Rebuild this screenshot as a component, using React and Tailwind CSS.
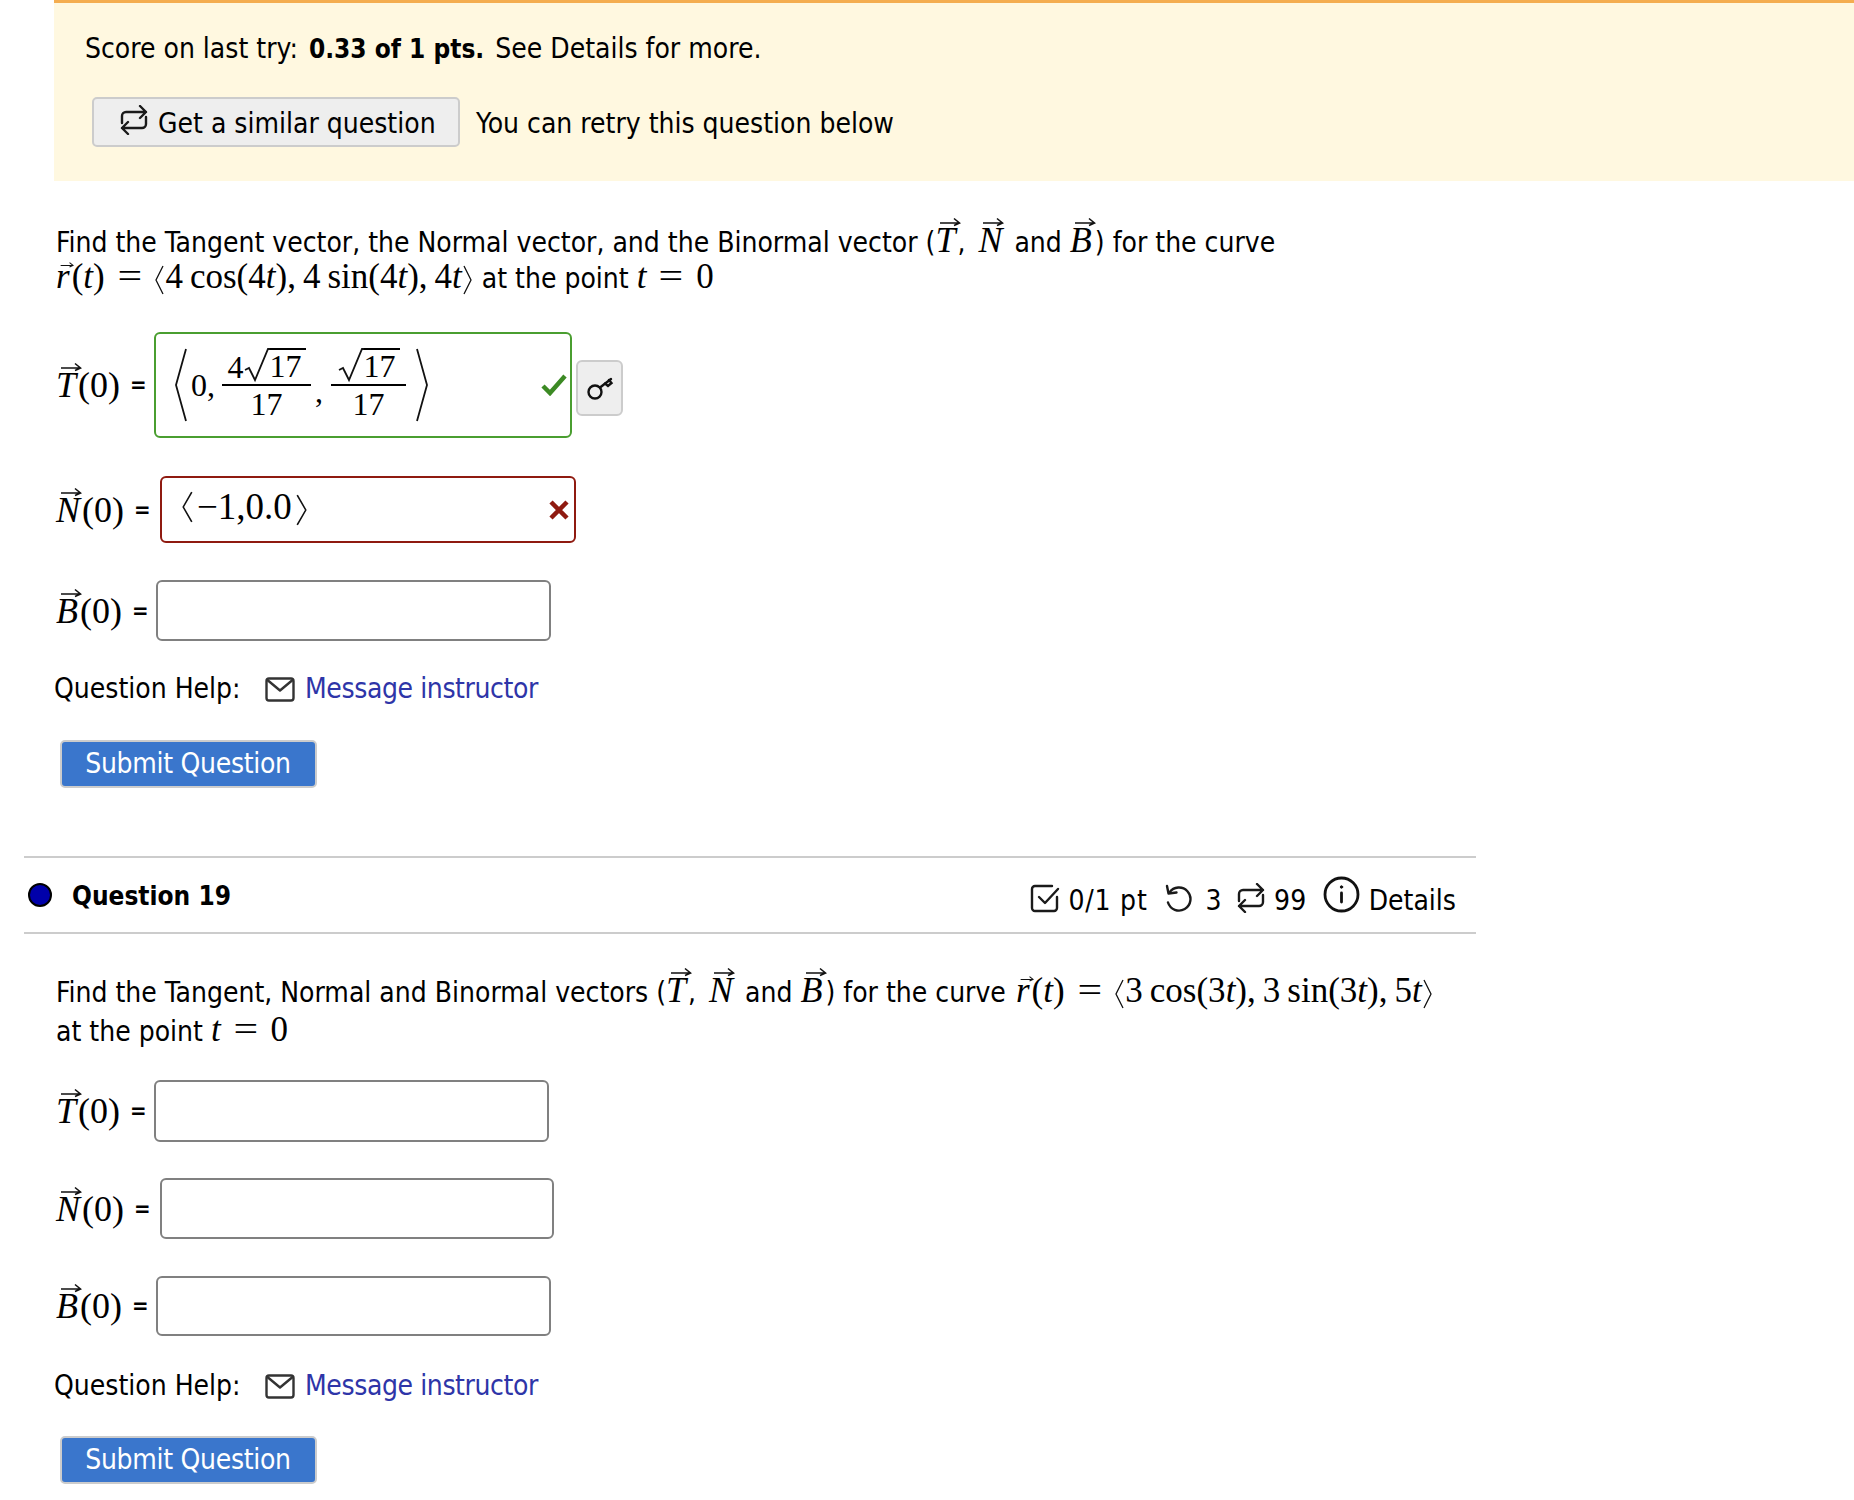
import React from "react";

const sans = "font-['DejaVu_Sans_Condensed','Noto_Sans',sans-serif]";
const serif = "font-['Liberation_Serif','DejaVu_Serif',serif]";

function Arrow({ w = 22, low }) {
  return (
    <svg width={w} height="11" viewBox="0 0 22 11" className={`absolute left-[4px] ${low ? "top-[0px]" : "top-[-6px]"}`} fill="none" stroke="#111" strokeWidth="1.6">
      <path d="M1 7h19M15 2.5 20.5 7 15 9.5" />
    </svg>
  );
}

function Vec({ c, w }) {
  return (
    <span className="relative mr-[2px] inline-block italic">
      {c}
      <Arrow w={w} low={c === "r"} />
    </span>
  );
}

function Mi({ children }) {
  return <span className="italic">{children}</span>;
}

function Eq() {
  return <span className="mx-[15px] inline-block scale-x-125">=</span>;
}

function Angle({ flip, w = 9, h = 30 }) {
  return (
    <svg width={w} height={h} viewBox="0 0 9 30" preserveAspectRatio="none" fill="none" stroke="#111" strokeWidth="1.3" className="mx-[1px] inline-block align-[-7px]">
      <path d={flip ? "M1 1l7 14-7 14" : "M8 1 1 15l7 14"} />
    </svg>
  );
}

function LoopIcon({ size = 30 }) {
  return (
    <svg width={size} height={size} viewBox="0 0 30 30" fill="none" stroke="#1a1a1a" strokeWidth="2.4" strokeLinecap="round" strokeLinejoin="round" className="shrink-0">
      <path d="M3 18v-7a4 4 0 0 1 4-4h20M21 1l6 6-6 6" />
      <path d="M27 12v7a4 4 0 0 1-4 4H3M9 17l-6 6 6 6" />
    </svg>
  );
}

function UndoIcon() {
  return (
    <svg width="30" height="30" viewBox="0 0 30 30" fill="none" stroke="#1a1a1a" strokeWidth="2.4" strokeLinecap="round" strokeLinejoin="round" className="shrink-0">
      <path d="M6.5 9.5a11.5 11.5 0 1 1-1.5 10" />
      <path d="M4 3l1.5 7.5 8-1" />
    </svg>
  );
}

function CheckBoxIcon() {
  return (
    <svg width="30" height="30" viewBox="0 0 30 30" fill="none" stroke="#1a1a1a" strokeWidth="2.4" strokeLinecap="round" strokeLinejoin="round" className="shrink-0">
      <path d="M27 14v11a3 3 0 0 1-3 3H5a3 3 0 0 1-3-3V6a3 3 0 0 1 3-3h17" />
      <path d="M9 14l6 6L28 6" />
    </svg>
  );
}

function InfoIcon() {
  return (
    <svg width="37" height="37" viewBox="0 0 37 37" fill="none" stroke="#111" strokeWidth="2.8" strokeLinecap="round" className="shrink-0">
      <circle cx="18.5" cy="18.5" r="16.5" />
      <path d="M18.5 17v9" />
      <circle cx="18.5" cy="11" r="1.2" fill="#111" stroke="#111" strokeWidth="1" />
    </svg>
  );
}

function MailIcon() {
  return (
    <svg width="30" height="25" viewBox="0 0 30 25" fill="none" stroke="#333" strokeWidth="2.4" strokeLinejoin="round" strokeLinecap="round" className="shrink-0">
      <rect x="1.5" y="1.5" width="27" height="22" rx="2.5" />
      <path d="M3 3.5l12 10 12-10" />
    </svg>
  );
}

function KeyIcon() {
  return (
    <svg width="28" height="28" viewBox="0 0 28 28" fill="none" stroke="#111" strokeWidth="2.4" strokeLinecap="round">
      <circle cx="9" cy="18" r="6.5" />
      <path d="M14 13.5 25 5" />
      <path d="M19 9.5l3 2.5 3.5-3-2.5-3" />
    </svg>
  );
}

function Radical() {
  return (
    <svg width="26" height="36" viewBox="0 0 26 36" fill="none" stroke="#111" strokeWidth="1.8" className="shrink-0">
      <path d="M1 22l4-2 6 12L24 1h2" />
    </svg>
  );
}

function BigDelim({ flip }) {
  return (
    <svg width="12" height="74" viewBox="0 0 12 74" fill="none" stroke="#111" strokeWidth="1.8" className="shrink-0">
      <path d={flip ? "M1 1l10 36L1 73" : "M11 1 1 37l10 36"} />
    </svg>
  );
}

function Frac({ four }) {
  return (
    <span className={`inline-flex flex-col items-stretch text-center ${four ? "w-[89px]" : "w-[75px]"}`}>
      <span className="flex h-[37px] items-end justify-center border-b-2 border-black leading-[32px]">
        {four ? <span className="mb-[1px]">4</span> : null}
        <Radical />
        <span className="mb-[1px] h-[35px] border-t-2 border-black pr-[4px] leading-[32px]">17</span>
      </span>
      <span className="h-[35px] leading-[36px]">17</span>
    </span>
  );
}

function Row({ letter, w, labelW, boxW, h, mt, children, border = "border-[#808080]" }) {
  return (
    <div className={`flex items-center ${mt}`}>
      <div className={`${labelW} flex shrink-0 items-center whitespace-nowrap`}>
        <span className={`${serif} text-[36px] leading-none`}>
          <Vec c={letter} w={w} />(0)
        </span>
        <span className="ml-[10px] text-[22px] font-bold leading-none">=</span>
      </div>
      <div className={`relative ${boxW} ${h} shrink-0 rounded-[6px] border-2 ${border} bg-white`}>{children}</div>
    </div>
  );
}

function Help({ mt }) {
  return (
    <div className={`flex h-[34px] items-center leading-[34px] ${mt}`}>
      <span className="ml-[-2px] w-[211px]">Question Help:</span>
      <MailIcon />
      <a className="ml-[10px] tracking-[-0.4px] text-[#2e35a8]">Message instructor</a>
    </div>
  );
}

function Submit({ mt }) {
  return (
    <button className={`${mt} ml-[3.5px] block h-[48px] w-[257px] rounded-[5px] border-2 border-[#ccc] bg-[#3a76cc] text-center leading-[42px] tracking-[-0.3px] text-white`}>
      Submit Question
    </button>
  );
}

const mathT = `${serif} text-[36px] leading-none`;
const mathL = `${serif} text-[35px] leading-none`;

export default function App() {
  return (
    <div className={`${sans} h-[1500px] w-[1854px] overflow-hidden bg-white text-[28px] leading-[34px] text-black`}>
      <div className="ml-[54px] h-[181px] border-t-[3px] border-[#f4ad50] bg-[#fff8e0] pt-[29px] pl-[31px]">
        <p className="whitespace-nowrap">
          Score on last try: <b className="ml-[3px] mr-[3px] text-[26px]">0.33 of 1 pts.</b> See Details for more.
        </p>
        <div className="mt-[31px] ml-[7px] flex items-center">
          <button className="flex h-[50px] w-[368px] items-center rounded-[5px] border-2 border-[#ccc] bg-[#eee] pl-[25px]">
            <span className="mt-[-5px]"><LoopIcon /></span>
            <span className="ml-[9px] whitespace-nowrap pt-[3px]">Get a similar question</span>
          </button>
          <span className="ml-[16px] whitespace-nowrap pt-[3px]">You can retry this question below</span>
        </div>
      </div>

      <div className="pl-[56px]">
        <p className="mt-[41px] whitespace-nowrap leading-[32px]">
          Find the Tangent vector, the Normal vector, and the Binormal vector (
          <span className={mathT}>
            <Vec c="T" />
          </span>
          ,{" "}
          <span className={`${mathT} ml-[5px] mr-[2px]`}>
            <Vec c="N" />
          </span>{" "}
          and{" "}
          <span className={mathT}>
            <Vec c="B" />
          </span>
          <span className="ml-[1px]">) for the curve</span>
          <br />
          <span className={mathL}>
            <Vec c="r" w={14} />(<Mi>t</Mi>)<Eq /><Angle />4{"\u2009"}cos(4<Mi>t</Mi>),{"\u2009"}4{"\u2009"}sin(4<Mi>t</Mi>),{"\u2009"}4<Mi>t</Mi><Angle flip />
          </span>
          <span className="ml-[9px]">at the point</span> <span className={mathL}><Mi>t</Mi><Eq />0</span>
        </p>

        <div className="mt-[37px] flex items-center">
          <Row letter="T" labelW="w-[98px]" boxW="w-[418px]" h="h-[106px]" mt="" border="border-[#4a9e30]">
            <div className={`${serif} flex h-full items-center pl-[19px] text-[32px] leading-none`}>
              <BigDelim />
              <span className="ml-[4px] mr-[7px]">0,</span>
              <Frac four />
              <span className="mx-[4px] mt-[12px] w-[12px]">,</span>
              <Frac />
              <span className="ml-[10px]"><BigDelim flip /></span>
            </div>
            <svg width="26" height="22" viewBox="0 0 26 22" className="absolute right-[3px] top-[40px]" fill="none" stroke="#3c8a24" strokeWidth="4.5">
              <path d="M2 12l7 7L24 2" />
            </svg>
          </Row>
          <button className="ml-[4px] mt-[6px] flex h-[56px] w-[47px] items-center justify-center rounded-[6px] border-2 border-[#ccc] bg-[#eee]">
            <KeyIcon />
          </button>
        </div>

        <Row letter="N" labelW="w-[104px]" boxW="w-[416px]" h="h-[67px]" mt="mt-[38px]" border="border-[#8f1a10]">
          <div className={`${serif} flex h-full items-center pl-[19px] pb-[6px] text-[37px] leading-none`}>
            <Angle w={11} h={32} />
            <span className="ml-[3px]">−1,0.0</span>
            <span className="ml-[3px]"><Angle flip w={11} h={32} /></span>
          </div>
          <svg width="20" height="20" viewBox="0 0 20 20" className="absolute right-[5px] top-[22px]" fill="none" stroke="#8f1a10" strokeWidth="4.5">
            <path d="M2 2l16 16M18 2 2 18" />
          </svg>
        </Row>
        <Row letter="B" labelW="w-[99.5px]" boxW="w-[395px]" h="h-[61px]" mt="mt-[37px]" />

        <Help mt="mt-[31px]" />
        <Submit mt="mt-[34px]" />
      </div>

      <div className="mt-[68px] ml-[24px] flex h-[78px] w-[1452px] items-center border-y-2 border-[#ccc]">
        <span className="ml-[4px] h-[24px] w-[24px] shrink-0 rounded-full border-2 border-black bg-[#0000aa]" />
        <b className="ml-[20px] mt-[2px] whitespace-nowrap text-[26px]">Question 19</b>
        <div className="ml-auto flex items-center whitespace-nowrap pr-[20px] pt-[6px]">
          <CheckBoxIcon />
          <span className="ml-[8px] pt-[6px] tracking-[0.8px]">0/1 pt</span>
          <span className="ml-[15px]"><UndoIcon /></span>
          <span className="ml-[13px] pt-[6px]">3</span>
          <span className="ml-[14.5px]"><LoopIcon /></span>
          <span className="ml-[8px] pt-[6px]">99</span>
          <span className="ml-[17px] mt-[-8px]"><InfoIcon /></span>
          <span className="ml-[8.5px] pt-[6px]">Details</span>
        </div>
      </div>

      <div className="pl-[56px]">
        <p className="mt-[38px] whitespace-nowrap leading-[38px]">
          Find the Tangent, Normal and Binormal vectors (
          <span className={mathT}>
            <Vec c="T" />
          </span>
          ,{" "}
          <span className={`${mathT} ml-[5px] mr-[2px]`}>
            <Vec c="N" />
          </span>{" "}
          and{" "}
          <span className={mathT}>
            <Vec c="B" />
          </span>
          <span className="ml-[1px]">) for the curve</span>{" "}
          <span className={`${mathL} ml-[2px]`}>
            <Vec c="r" w={14} />(<Mi>t</Mi>)<Eq /><Angle />3{"\u2009"}cos(3<Mi>t</Mi>),{"\u2009"}3{"\u2009"}sin(3<Mi>t</Mi>),{"\u2009"}5<Mi>t</Mi><Angle flip />
          </span>
          <br />
          at the point <span className={mathL}><Mi>t</Mi><Eq />0</span>
        </p>

        <Row letter="T" labelW="w-[98px]" boxW="w-[395px]" h="h-[62px]" mt="mt-[29px]" />
        <Row letter="N" labelW="w-[104px]" boxW="w-[394px]" h="h-[61px]" mt="mt-[36px]" />
        <Row letter="B" labelW="w-[99.5px]" boxW="w-[395px]" h="h-[60px]" mt="mt-[37px]" />

        <Help mt="mt-[33px]" />
        <Submit mt="mt-[33px]" />
      </div>
    </div>
  );
}
